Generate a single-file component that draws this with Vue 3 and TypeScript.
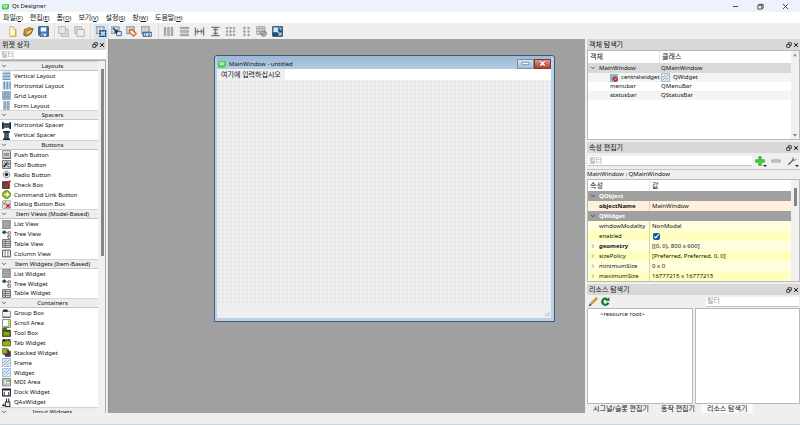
<script setup lang="ts">
import { h, ref } from 'vue'

/* Each shape is [path data, fill, stroke, stroke width] on a 16 x 16 grid. */
type Shape = [string, string, string?, number?]

const steel = '#5b7f9f'
const grey = '#8c8c8c'

const threeRows: Shape[] = [
  ['M1 1h14v4H1z M1 6h14v4H1z M1 11h14v4H1z', '#a9cbe4'],
  ['M1 5h14 M1 10h14 M1 15h14', 'none', steel, 1.5],
]
const threeCols: Shape[] = [
  ['M1 1h4v14H1z M6 1h4v14H6z M11 1h4v14h-4z', '#a9cbe4'],
  ['M4.5 1v14 M9.5 1v14 M14.5 1v14', 'none', steel, 1.5],
]
const nineCells: Shape[] = [
  ['M1 1h4v4H1z M6 1h4v4H6z M11 1h4v4h-4z M1 6h4v4H1z M6 6h4v4H6z M11 6h4v4h-4z M1 11h4v4H1z M6 11h4v4H6z M11 11h4v4h-4z', '#a9cbe4', steel, 1],
]
const sixCells: Shape[] = [
  ['M3 1h4v4H3z M9 1h4v4H9z M3 6h4v4H3z M9 6h4v4H9z M3 11h4v4H3z M9 11h4v4H9z', '#a9cbe4', steel, 1],
]
const listShape: Shape[] = [
  ['M1 0h14v16H1z', '#9b9b9b', '#777777', 1],
  ['M3 3h9 M3 6h9 M3 9h9 M3 12h9', 'none', '#b8b8b8', 1],
]
const treeShape: Shape[] = [
  ['M0 4l4-3 4 3-4 3z', '#1b6b2c', '#124a1e', 1],
  ['M8 5h3v8 M8 12h3', 'none', '#555555', 1],
  ['M11 3h4v4h-4z M11 10h4v5h-4z', '#eeeeee', '#555555', 1.2],
]
const tableShape: Shape[] = [
  ['M1 1h14v14H1z', '#d6d6d6', '#555555', 1.4],
  ['M1 4.5h14 M1 8h14 M1 11.5h14 M6 1v14', 'none', '#555555', 1.2],
]
const frameShape: Shape[] = [
  ['M1 1h14v14H1z', '#e8f0f8', '#8fb2da', 1.6],
  ['M2 9l6-6 M3 13L13 3 M8 13l5-5', 'none', '#7f93a8', 1.5],
]
const form: Shape[] = [
  ['M0 1h12v10H0z', '#b8bec6', '#7d858f', 1],
  ['M1 4h10 M1 7h10 M4 2v8 M8 2v8', 'none', '#e6e9ed', 1],
]

const icons: Record<string, Shape[]> = {
  'vertical-layout': threeRows,
  'horizontal-layout': threeCols,
  'grid-layout': nineCells,
  'form-layout': sixCells,
  'horizontal-spacer': [
    ['M0 2h3v12H0z M13 2h3v12h-3z', '#182430'],
    ['M2 4h12v8H2z', '#2a3d4e'],
    ['M4 7l2 3 2-3 2 3 2-3', 'none', '#6d93b5', 1],
  ],
  'vertical-spacer': [
    ['M2 0h12v3H2z M2 13h12v3H2z', '#182430'],
    ['M4 2h8v12H4z', '#2a3d4e'],
    ['M6 4l4 2-4 2 4 2-4 2', 'none', '#6d93b5', 1],
  ],
  'push-button': [
    ['M1 1h14v13H1z', '#e2e2e2', '#777777', 1.4],
    ['M4 6h8v4H4z', '#ffffff', '#555555', 1.2],
    ['M6 8h4', 'none', '#222222', 1.2],
    ['M1 15h15V2', 'none', '#444444', 1.4],
  ],
  'tool-button': [
    ['M1 1h14v14H1z', '#cfd4da', '#555555', 1.4],
    ['M3 12l6-6', 'none', '#222222', 3],
    ['M8 3l5 5', 'none', '#3c6a94', 2],
    ['M4 4l3 3 M9 10l4 3', 'none', '#333333', 1.4],
  ],
  'radio-button': [
    ['M8 2a6 6 0 1 0 .1 0z', '#eeeeee', '#777777', 1.5],
    ['M8 5.500a2.500 2.500 0 1 0 .1 0z', '#111111', '#222222', 1.5],
  ],
  'check-box': [
    ['M1 3h12v12H1z', '#4b4b4b', '#222222', 1.4],
    ['M3 7l4 5 8-11', 'none', '#dd1f1f', 3],
  ],
  'command-link': [
    ['M8 1a7 7 0 1 0 .1 0z', '#98bd19', '#53700a', 1.5],
    ['M4 8h7 M8 4.500l4 3.500-4 3.500', 'none', '#ffffff', 2],
  ],
  'dialog-box': [
    ['M1 1h14v14H1z', '#dedede', '#999999', 1.2],
    ['M2 5l2 3 3-6', 'none', '#4b9a3c', 1.6],
    ['M7 7l7 7 M14 7l-7 7', 'none', '#d02035', 2.4],
  ],
  list: listShape,
  tree: treeShape,
  table: tableShape,
  column: [
    ['M1 2h14v12H1z', '#f5f5f5', '#444444', 1.6],
    ['M5.500 2v12 M10.500 2v12', 'none', '#666666', 1.3],
  ],
  'group-box': [
    ['M1 4h14v10H1z', '#f0f0f0', '#777777', 1.4],
    ['M2 1h8v4H2z', '#222222'],
    ['M1 15h14', 'none', '#444444', 1.4],
  ],
  'scroll-area': [
    ['M1 1h14v14H1z', '#ffffff', '#666666', 1.4],
    ['M12 2v12', 'none', '#a7c850', 3],
    ['M3 14h8', 'none', '#555555', 1.6],
  ],
  'tool-box': [
    ['M1 1h7v3h7v11H1z', '#5d7d10', '#2e3d08', 1.4],
    ['M3 7h10v6H3z', '#7da61c'],
    ['M2 5h12', 'none', '#222222', 1.4],
  ],
  'tab-widget': [
    ['M1 5h14v9H1z', '#8fb51b', '#3f5a0a', 1.4],
    ['M1 2h5v4H1z', '#222222'],
    ['M6 2h4v3H6z', '#c32020'],
    ['M10 2h5v3h-5z', '#1f3e8c'],
  ],
  'stacked-widget': [
    ['M6 6h9v9H6z', '#1f3e8c', '#14234f', 1],
    ['M3 3h9v9H3z', '#c32020', '#6c1111', 1],
    ['M1 1h8v9H1z', '#8fb51b', '#3f5a0a', 1.2],
  ],
  frame: frameShape,
  'mdi-area': [
    ['M1 1h14v13H1z', '#ffffff', '#555555', 1.4],
    ['M3 3h5v9H3z', '#d6e2ee', '#888888', 1],
    ['M9 3h5v4H9z', '#78b04d'],
    ['M9 9h5v4H9z', '#b9c6d3'],
  ],
  'dock-widget': [
    ['M1 2h14v12H1z', '#ffffff', '#1d2833', 1.8],
    ['M1 3h14', 'none', '#1d2833', 3],
    ['M4 7v6 M12 7v6', 'none', '#1d2833', 1.6],
  ],
  'qax-widget': [
    ['M6 7h8v8H6z', '#f0f0f0', '#333333', 1.8],
    ['M8 1v6 M12 1v6 M0 13h6', 'none', '#333333', 2],
    ['M3 10v5', 'none', '#333333', 1.6],
  ],

  new: [
    ['M4 1h5l4 4v10H4z', '#fffbe2', '#b8a56a', 1.2],
    ['M12 5v10H5', 'none', '#dcae36', 1.6],
    ['M9 1v4h4', '#ffffff', '#b8a56a', 1],
  ],
  open: [
    ['M1 13l1-8 4-1 2-2 6 2-2 7-7 4z', '#d9a13c', '#7a5518', 1.2],
    ['M2 14l4-7 9-3-4 7z', '#f3cf75', '#7a5518', 1.2],
  ],
  save: [
    ['M1 1h14v14H3l-2-2z', '#3c76b4', '#244d7c', 1.4],
    ['M4 2h8v6H4z', '#f5f9fd'],
    ['M5 11h7v4H5z', '#dbe5ef'],
    ['M6 12h2v3H6z', '#244d7c'],
  ],
  back: [
    ['M5 5h10v10H5z', '#e0e0e0', '#b4b4b4', 1.4],
    ['M1 1h10v10H1z', '#e6e6e6', '#b4b4b4', 1.4],
  ],
  front: [
    ['M1 1h10v10H1z', '#dddddd', '#b4b4b4', 1.4],
    ['M4 5h11v10H4z', '#eeeeee', '#b0b0b0', 1.4],
  ],
  'edit-widgets': [
    ...form,
    ['M6 7h8v8H6z', '#b7d5ef', '#1f4467', 1.2],
    ['M5 6h2v2H5z M9 6h2v2H9z M13 6h2v2h-2z M5 10h2v2H5z M13 10h2v2h-2z M5 14h2v2H5z M9 14h2v2H9z M13 14h2v2h-2z', '#13293f'],
  ],
  'edit-signals': [
    ...form,
    ['M8 8h7v6H8z', '#dbe9f6', '#3d6c9d', 1.4],
    ['M3 3l6 6 M9 5v4H5', 'none', '#152c47', 1.8],
  ],
  'edit-buddies': [
    ...form,
    ['M5 6l4-1 6 6-4 4-6-5z', '#f7c9a2', '#c25a1c', 1.5],
    ['M8 8l3 3', 'none', '#ffffff', 1.5],
  ],
  'edit-tabs': [
    ...form,
    ['M3 9h12v6H3z', '#5d93c8', '#28507c', 1.2],
    ['M5 11v3 M8 11h2v3H8z M12 11h2v3', 'none', '#ffffff', 1.2],
  ],
  'lay-h': [['M2 2h2v12H2z M7 2h2v12H7z M12 2h2v12h-2z', '#dddddd', grey, 1.2]],
  'lay-v': [['M2 2h12v2H2z M2 7h12v2H2z M2 12h12v2H2z', '#dddddd', grey, 1.2]],
  'split-h': [['M2 2v12 M14 2v12 M4 8h8 M6 5L4 8l2 3 M10 5l2 3-2 3', 'none', '#777777', 1.8]],
  'split-v': [['M2 2h12 M2 14h12 M8 4v8 M5 6l3-2 3 2 M5 10l3 2 3-2', 'none', '#777777', 1.8]],
  'lay-grid': [
    ['M2 2h2v2H2z M7 2h2v2H7z M12 2h2v2h-2z M2 7h2v2H2z M7 7h2v2H7z M12 7h2v2h-2z M2 12h2v2H2z M7 12h2v2H7z M12 12h2v2h-2z', '#dddddd', grey, 1.2],
  ],
  'lay-form': [['M4 2h2v2H4z M10 2h2v2h-2z M4 7h2v2H4z M10 7h2v2h-2z M4 12h2v2H4z M10 12h2v2h-2z', '#dddddd', grey, 1.2]],
  'break-layout': [
    ['M1 1h12v11H1z M1 4h12 M1 8h12 M5 1v11 M9 1v11', '#e2e2e2', '#999999', 1.2],
    ['M11 7a4 4 0 1 0 .1 0z M8 13l6-4', '#bbbbbb', '#777777', 1.4],
  ],
  'adjust-size': [
    ['M1 1h14v14H1z', '#245179', '#18344f', 1.2],
    ['M2 2h7v7H2z', '#d5e7f6'],
    ['M6 6l7 7 M13 9v4H9 M10 3h3v3', 'none', '#b8dbf6', 1.6],
  ],

  qt: [
    ['M3 2h13v10l-3 3H0V5z', '#41cd52'],
    ['M4 5h3v5H4z M10 4v6h2 M9 6h4', 'none', '#ffffff', 1.4],
  ],
  chevron: [['M3 5l5 5 5-5', 'none', '#333333', 2]],
  right: [['M5 3l5 5-5 5', 'none', '#777777', 1.8]],
  float: [
    ['M6 2h8v7H6z', '#ffffff', '#111111', 2.2],
    ['M2 7h8v7H2z', '#ffffff', '#111111', 2.2],
  ],
  close: [['M3 3l10 10 M13 3L3 13', 'none', '#111111', 2.6]],
  minimize: [['M2 8h12', 'none', '#222222', 1.8]],
  restore: [
    ['M5 5V3h9v9h-2', 'none', '#222222', 1.8],
    ['M2 5h9v9H2z', 'none', '#222222', 1.8],
  ],
  quit: [['M2 2l12 12 M14 2L2 14', 'none', '#222222', 1.8]],
  'win-min': [['M2 6h12v4H2z', '#ffffff', '#5c6f85', 1.2]],
  'win-close': [
    ['M3 3l10 10 M13 3L3 13', 'none', '#66241d', 6],
    ['M3 3l10 10 M13 3L3 13', 'none', '#ffffff', 4],
  ],
  broken: [
    ...nineCells,
    ['M10.500 6a4.500 4.500 0 1 0 .1 0z', '#d12c2c', '#7c1515', 1],
    ['M8 13l5-5', 'none', '#ffffff', 1.4],
  ],
  plus: [
    ['M6 1h4v5h5v4h-5v5H6v-5H1V6h5z', '#3fd43a', '#1c9a1c', 1],
  ],
  minus: [['M1 6h14v4H1z', '#c3c3c3', '#a2a2a2', 1]],
  wrench: [
    ['M2 14l9-9', 'none', '#555555', 2],
    ['M10 2l-1 4 3 1 3-2', 'none', '#777777', 1.6],
  ],
  pencil: [
    ['M2 14l2-4 9-9 2 2-9 9z', '#f0a834', '#9a5f14', 1],
    ['M1 15l2-4 2 2z', '#333333'],
    ['M12 2l2 2', 'none', '#d98a2a', 2],
  ],
  reload: [
    ['M13 10a5.500 5.500 0 1 1-2-6', 'none', '#127a22', 4],
    ['M8 7h7V0z', '#127a22'],
  ],
  up: [['M3 11l5-7 5 7z', '#909090']],
  down: [['M3 5l5 7 5-7z', '#777777']],
  grip: [['M12 1h3v3h-3z M12 6h3v3h-3z M12 11h3v3h-3z M7 6h3v3H7z M7 11h3v3H7z M2 11h3v3H2z', '#b0b0b0']],
}

const Glyph = (props: { name: string; size?: number }) =>
  h(
    'svg',
    { class: 'glyph', viewBox: '0 0 16 16', width: props.size ?? 9, height: props.size ?? 9, 'aria-hidden': 'true' },
    icons[props.name].map(([d, fill, stroke, width]) =>
      h('path', { d, fill, stroke: stroke ?? 'none', 'stroke-width': width ?? 0 }),
    ),
  )
Glyph.props = ['name', 'size']

const menus = [
  ['파일', 'F'], ['편집', 'E'], ['폼', 'O'], ['보기', 'V'], ['설정', 'S'], ['창', 'W'], ['도움말', 'H'],
]

const toolGroups = [
  { id: 'file', tools: ['new', 'open', 'save'] },
  { id: 'order', tools: ['back', 'front'] },
  { id: 'mode', tools: ['edit-widgets', 'edit-signals', 'edit-buddies', 'edit-tabs'] },
  { id: 'layout', tools: ['lay-h', 'lay-v', 'split-h', 'split-v', 'lay-grid', 'lay-form', 'break-layout', 'adjust-size'] },
]
const mode = ref('edit-widgets')

interface Row { label: string; icon?: string }
const widgetRows: Row[] = [
  { label: 'Layouts' },
  { label: 'Vertical Layout', icon: 'vertical-layout' },
  { label: 'Horizontal Layout', icon: 'horizontal-layout' },
  { label: 'Grid Layout', icon: 'grid-layout' },
  { label: 'Form Layout', icon: 'form-layout' },
  { label: 'Spacers' },
  { label: 'Horizontal Spacer', icon: 'horizontal-spacer' },
  { label: 'Vertical Spacer', icon: 'vertical-spacer' },
  { label: 'Buttons' },
  { label: 'Push Button', icon: 'push-button' },
  { label: 'Tool Button', icon: 'tool-button' },
  { label: 'Radio Button', icon: 'radio-button' },
  { label: 'Check Box', icon: 'check-box' },
  { label: 'Command Link Button', icon: 'command-link' },
  { label: 'Dialog Button Box', icon: 'dialog-box' },
  { label: 'Item Views (Model-Based)' },
  { label: 'List View', icon: 'list' },
  { label: 'Tree View', icon: 'tree' },
  { label: 'Table View', icon: 'table' },
  { label: 'Column View', icon: 'column' },
  { label: 'Item Widgets (Item-Based)' },
  { label: 'List Widget', icon: 'list' },
  { label: 'Tree Widget', icon: 'tree' },
  { label: 'Table Widget', icon: 'table' },
  { label: 'Containers' },
  { label: 'Group Box', icon: 'group-box' },
  { label: 'Scroll Area', icon: 'scroll-area' },
  { label: 'Tool Box', icon: 'tool-box' },
  { label: 'Tab Widget', icon: 'tab-widget' },
  { label: 'Stacked Widget', icon: 'stacked-widget' },
  { label: 'Frame', icon: 'frame' },
  { label: 'Widget', icon: 'frame' },
  { label: 'MDI Area', icon: 'mdi-area' },
  { label: 'Dock Widget', icon: 'dock-widget' },
  { label: 'QAxWidget', icon: 'qax-widget' },
  { label: 'Input Widgets' },
]

const enabled = ref(true)
const properties = [
  { name: 'windowModality', value: 'NonModal' },
  { name: 'enabled', check: true },
  { name: 'geometry', value: '[(0, 0), 800 x 600]', bold: true, opens: true },
  { name: 'sizePolicy', value: '[Preferred, Preferred, 0, 0]', opens: true },
  { name: 'minimumSize', value: '0 x 0', opens: true },
  { name: 'maximumSize', value: '16777215 x 16777215', opens: true },
]

const tabs = ['시그널/슬롯 편집기', '동작 편집기', '리소스 탐색기']
const activeTab = ref(2)
</script>

<template>
  <div class="app">
    <header class="titlebar">
      <Glyph name="qt" :size="7" />
      <span class="app-name">Qt Designer</span>
      <button class="win-button" aria-label="Minimize"><Glyph name="minimize" :size="7" /></button>
      <button class="win-button" aria-label="Restore"><Glyph name="restore" :size="7" /></button>
      <button class="win-button" aria-label="Close"><Glyph name="quit" :size="7" /></button>
    </header>

    <nav class="menubar">
      <button v-for="[label, key] in menus" :key="key">{{ label }}<span class="key">(<u>{{ key }}</u>)</span></button>
    </nav>

    <div class="toolbar">
      <div v-for="group in toolGroups" :key="group.id" class="tool-group" :class="group.id">
        <button
          v-for="tool in group.tools"
          :key="tool"
          class="tool"
          :class="{ active: tool === mode }"
          :aria-label="tool"
          @click="group.id === 'mode' && (mode = tool)"
        >
          <Glyph :name="tool" :size="11" />
        </button>
      </div>
    </div>

    <div class="workspace">
      <aside class="widget-box">
        <div class="dock-title">
          <h2>위젯 상자</h2>
          <button aria-label="Float"><Glyph name="float" :size="6" /></button>
          <button aria-label="Close"><Glyph name="close" :size="6" /></button>
        </div>
        <input class="filter" type="text" placeholder="필터" aria-label="필터" />
        <div class="widget-scroll">
          <ul class="widget-list">
            <li v-for="row in widgetRows" :key="row.label" :class="{ category: !row.icon }">
              <Glyph :name="row.icon ?? 'chevron'" :size="row.icon ? 9 : 6" />
              <span>{{ row.label }}</span>
            </li>
          </ul>
          <div class="track"><div class="thumb"></div></div>
        </div>
      </aside>

      <main class="canvas">
        <section class="form-window">
          <div class="form-title">
            <Glyph name="qt" :size="8" />
            <span>MainWindow - untitled</span>
            <button class="form-min" aria-label="Minimize"><Glyph name="win-min" :size="9" /></button>
            <button class="form-close" aria-label="Close"><Glyph name="win-close" :size="7" /></button>
          </div>
          <div class="form-client">
            <div class="form-menu"><button>여기에 입력하십시오</button></div>
            <div class="form-grid"></div>
            <div class="form-status"><Glyph name="grip" :size="6" /></div>
          </div>
        </section>
      </main>

      <aside class="docks">
        <section class="dock">
          <div class="dock-title">
            <h2>객체 탐색기</h2>
            <button aria-label="Float"><Glyph name="float" :size="6" /></button>
            <button aria-label="Close"><Glyph name="close" :size="6" /></button>
          </div>
          <div class="view objects">
            <div class="sheet">
              <table>
                <thead><tr><th>객체</th><th>클래스</th></tr></thead>
                <tbody>
                  <tr class="selected">
                    <td><div class="cell"><Glyph name="chevron" :size="6" /><span class="root">MainWindow</span></div></td>
                    <td>QMainWindow</td>
                  </tr>
                  <tr>
                    <td><div class="cell child"><Glyph name="broken" :size="8" /><span>centralwidget</span></div></td>
                    <td><div class="cell"><Glyph name="frame" :size="9" /><span>QWidget</span></div></td>
                  </tr>
                  <tr><td><div class="cell child">menubar</div></td><td>QMenuBar</td></tr>
                  <tr><td><div class="cell child">statusbar</div></td><td>QStatusBar</td></tr>
                </tbody>
              </table>
            </div>
            <div class="arrows"><Glyph name="up" :size="6" /><Glyph name="down" :size="6" /></div>
          </div>
        </section>

        <section class="dock">
          <div class="dock-title">
            <h2>속성 편집기</h2>
            <button aria-label="Float"><Glyph name="float" :size="6" /></button>
            <button aria-label="Close"><Glyph name="close" :size="6" /></button>
          </div>
          <div class="property-tools">
            <input class="filter" type="text" placeholder="필터" aria-label="필터" />
            <button class="drop" aria-label="Add"><Glyph name="plus" :size="10" /></button>
            <button aria-label="Remove"><Glyph name="minus" :size="10" /></button>
            <button class="drop" aria-label="Configure"><Glyph name="wrench" :size="10" /></button>
          </div>
          <p class="object-path">MainWindow : QMainWindow</p>
          <div class="view properties">
            <div class="sheet">
              <table>
                <thead><tr><th>속성</th><th>값</th></tr></thead>
                <tbody>
                  <tr class="class-row"><td colspan="2"><div class="cell"><Glyph name="chevron" :size="6" /><span>QObject</span></div></td></tr>
                  <tr class="peach"><td><div class="cell plain"><b>objectName</b></div></td><td>MainWindow</td></tr>
                  <tr class="class-row"><td colspan="2"><div class="cell"><Glyph name="chevron" :size="6" /><span>QWidget</span></div></td></tr>
                  <tr v-for="(p, i) in properties" :key="p.name" :class="i % 2 ? 'deep' : 'pale'">
                    <td>
                      <div class="cell" :class="{ plain: !p.opens }">
                        <Glyph v-if="p.opens" name="right" :size="6" />
                        <label v-if="p.check" for="enabled">{{ p.name }}</label>
                        <span v-else :class="{ strong: p.bold }">{{ p.name }}</span>
                      </div>
                    </td>
                    <td>
                      <input v-if="p.check" id="enabled" v-model="enabled" type="checkbox" />
                      <template v-else>{{ p.value }}</template>
                    </td>
                  </tr>
                </tbody>
              </table>
            </div>
            <div class="track"><div class="thumb"></div></div>
          </div>
        </section>

        <section class="dock resources">
          <div class="dock-title">
            <h2>리소스 탐색기</h2>
            <button aria-label="Float"><Glyph name="float" :size="6" /></button>
            <button aria-label="Close"><Glyph name="close" :size="6" /></button>
          </div>
          <div class="resource-tools">
            <button aria-label="Edit"><Glyph name="pencil" :size="10" /></button>
            <button aria-label="Reload"><Glyph name="reload" :size="9" /></button>
            <input class="filter" type="text" placeholder="필터" aria-label="필터" />
          </div>
          <div class="panes">
            <div class="view pane">&lt;resource root&gt;</div>
            <div class="view pane"></div>
          </div>
          <div class="tabs">
            <button v-for="(tab, i) in tabs" :key="tab" :class="{ active: i === activeTab }" @click="activeTab = i">{{ tab }}</button>
          </div>
        </section>
      </aside>
    </div>

    <footer class="statusbar"></footer>
  </div>
</template>

<style>
body {
  margin: 0;
}
</style>

<style scoped>
* {
  box-sizing: border-box;
}

.app {
  display: flex;
  flex-direction: column;
  height: 100vh;
  background: #efefef;
  color: #111111;
  font: 6px/10px "Noto Sans", "Noto Sans CJK KR", sans-serif;
  white-space: nowrap;
}

button,
input {
  margin: 0;
  padding: 0;
  border: 0;
  background: none;
  color: inherit;
  font: inherit;
}

button {
  display: flex;
  align-items: center;
  justify-content: center;
}

/* Hangul labels are set one step larger than Latin ones. */
.menubar button,
.dock-title h2,
.filter,
.form-menu button,
.tabs button,
th {
  font-size: 7px;
}

.menubar .key {
  font-size: 6px;
}

.glyph {
  display: block;
  flex: none;
}

.titlebar {
  display: flex;
  align-items: center;
  height: 12px;
  flex: none;
  padding: 0 2px;
  background: #eef3fb;
}

.app-name {
  flex: 1;
  padding-left: 3px;
}

.win-button {
  width: 25px;
  height: 12px;
}

.menubar {
  display: flex;
  gap: 7px;
  flex: none;
  height: 11px;
  padding: 0 3px;
  background: #ffffff;
}

.toolbar {
  display: flex;
  flex: none;
  height: 16px;
  background: #efefef;
}

.tool-group {
  display: flex;
  align-items: center;
  justify-content: space-between;
  border-right: 1px solid #dcdcdc;
}

.tool-group.file {
  width: 55px;
  padding: 0 3px 0 5px;
}

.tool-group.order {
  width: 36px;
  padding: 0 3px 0 1px;
}

.tool-group.mode {
  width: 68px;
  padding: 0 4px 0 3px;
}

.tool-group.layout {
  width: 126px;
  padding-left: 2px;
  border-right: 0;
}

.tool {
  width: 15px;
  height: 15px;
}

.tool.active {
  background: #cce8ff;
}

.workspace {
  display: flex;
  flex: 1;
  min-height: 0;
}

.statusbar {
  flex: none;
  height: 12px;
  border-bottom: 1px solid #cfd3de;
}

.dock-title {
  display: flex;
  align-items: center;
  flex: none;
  height: 11px;
  padding: 0 1px 0 2px;
  background: #d8d8d8;
}

.dock-title h2 {
  flex: 1;
  margin: 0;
  font-weight: 400;
}

.dock-title button {
  width: 7px;
  height: 9px;
}

.filter {
  height: 10px;
  min-width: 0;
  padding: 0 1px;
  border-bottom: 1px solid #c4c4c4;
  background: #ffffff;
}

.filter::placeholder {
  color: #9a9a9a;
  opacity: 1;
}

.view {
  border: 1px solid #b9b9b9;
  background: #ffffff;
}

/* Widget box */
.widget-box {
  display: flex;
  flex-direction: column;
  flex: none;
  width: 109px;
  padding-right: 2px;
  border-right: 1px solid #8f8f8f;
}

.widget-scroll {
  display: flex;
  flex: 1;
  min-height: 0;
  overflow: hidden;
  border-top: 1px solid #b0b0b0;
  border-right: 1px solid #b0b0b0;
}

.widget-list {
  display: grid;
  grid-auto-rows: minmax(0, 1fr);
  flex: none;
  width: 98px;
  height: calc(100% + 4px);
  margin: 0;
  padding: 0;
  background: #ffffff;
  list-style: none;
}

.widget-list li {
  display: flex;
  align-items: center;
  gap: 3px;
  padding-left: 2px;
}

.widget-list .category {
  gap: 0;
  padding-left: 1px;
  border-top: 1px solid #d4d4d4;
  border-bottom: 1px solid #c4c4c4;
  background: #ededed;
}

.category span {
  flex: 1;
  text-align: center;
}

.track {
  flex: 1;
  background: #f0f0f0;
}

.widget-scroll .thumb {
  width: 3px;
  height: 53%;
  margin: 8px 0 0 3px;
  background: #858585;
}

/* Form canvas */
.canvas {
  position: relative;
  flex: 1;
  min-width: 0;
  background: #a0a0a0;
}

.form-window {
  position: absolute;
  left: 105px;
  top: 16px;
  display: flex;
  flex-direction: column;
  width: 341px;
  height: 267px;
  padding: 0 3px 3px 2px;
  border: 1px solid #3f5a6c;
  border-radius: 3px 3px 0 0;
  background: #b9d1ea;
}

.form-title {
  display: flex;
  align-items: center;
  flex: none;
  height: 13px;
  padding: 2px 0 0 1px;
  background: linear-gradient(#9cb8d6, #b4cbe4);
}

.form-title span {
  flex: 1;
  padding-left: 3px;
}

.form-min,
.form-close {
  width: 17px;
  height: 10px;
  border: 1px solid #7890aa;
  background: linear-gradient(#d5e1ee, #a9bfd6);
}

.form-close {
  border-color: #7a3a35;
  background: linear-gradient(#e29a8e, #bd3a2a);
}

.form-client {
  display: flex;
  flex: 1;
  flex-direction: column;
  background: #efefef;
}

.form-menu {
  display: flex;
  height: 11px;
  background: #ffffff;
}

.form-menu button {
  padding: 0 4px;
  background: #f0f0f0;
}

.form-grid {
  flex: 1;
  background: radial-gradient(circle at 2px 2px, #e5e5e5 0, #e5e5e5 1px, transparent 1px) 0 0 / 4px 4px;
}

.form-status {
  display: flex;
  align-items: flex-end;
  justify-content: flex-end;
  height: 12px;
  padding: 1px;
}

/* Right docks */
.docks {
  display: flex;
  flex-direction: column;
  flex: none;
  width: 215px;
  gap: 2px;
  padding-left: 2px;
}

.view {
  display: flex;
  overflow: hidden;
}

.sheet {
  flex: 1;
  min-width: 0;
}

table {
  width: 100%;
  border-collapse: separate;
  border-spacing: 0;
  table-layout: fixed;
}

th {
  height: 11px;
  padding: 0 2px;
  font-weight: 400;
  text-align: left;
}

td {
  height: 10px;
  padding: 0;
}

.cell {
  display: flex;
  align-items: center;
  gap: 3px;
}

.objects {
  height: 90px;
}

.objects th {
  height: 12px;
}

.objects th:first-child {
  width: 72px;
  border-right: 1px solid #e8e8e8;
}

.objects td:first-child {
  padding-left: 2px;
}

.objects td + td {
  padding-left: 1px;
}

.objects tbody {
  line-height: 9px;
}

.objects tbody td {
  height: 9px;
}

.objects .selected td {
  height: 10px;
}

.objects tr:nth-child(even) {
  background: #f4f4f4;
}

.objects .selected {
  background: #d9d9d9;
}

.cell.child {
  padding-left: 20px;
}

.arrows {
  display: flex;
  flex-direction: column;
  justify-content: space-between;
  width: 8px;
  padding: 1px;
  background: #f0f0f0;
}

.property-tools {
  display: flex;
  align-items: center;
  height: 16px;
  padding-left: 1px;
}

.property-tools .filter {
  flex: 1;
}

.property-tools button {
  width: 16px;
  height: 14px;
}

.drop {
  position: relative;
}

.drop::after {
  position: absolute;
  right: 1px;
  bottom: 1px;
  border: 2px solid transparent;
  border-top-color: #222222;
  border-bottom: 0;
  content: "";
}

.object-path {
  margin: 0;
  border-top: 1px solid #c4c4c4;
  line-height: 9px;
}

.properties {
  height: 103px;
}

.properties th:first-child {
  width: 62px;
  border-right: 1px solid #e0e0e0;
}

.properties td:first-child {
  padding-left: 2px;
  border-right: 1px solid #d5d5ae;
}

.properties td + td {
  padding-left: 2px;
}

.cell.plain {
  padding-left: 9px;
}

.properties tr.class-row td {
  border: 0;
  background: #a0a0a0;
  color: #ffffff;
  font-weight: 700;
}

.peach {
  background: #ffefdf;
}

.pale {
  background: #ffffdf;
}

.deep {
  background: #ffffbf;
}

.strong {
  font-weight: 700;
}

.properties .track {
  flex: none;
  width: 8px;
}

.properties .thumb {
  width: 3px;
  height: 18px;
  margin: 8px 0 0 3px;
  background: #858585;
}

input[type="checkbox"] {
  display: block;
  width: 7px;
  height: 7px;
  margin-left: 1px;
  accent-color: #0a5aa8;
}

.resources {
  display: flex;
  flex: 1;
  flex-direction: column;
  min-height: 0;
}

.resource-tools {
  display: flex;
  align-items: center;
  gap: 3px;
  height: 13px;
  padding: 0 1px;
}

.resource-tools .filter {
  width: 93px;
  margin-left: auto;
}

.panes {
  display: flex;
  flex: 1;
  gap: 2px;
}

.pane {
  flex: 1;
  padding-left: 12px;
}

.tabs {
  display: flex;
  height: 9px;
  line-height: 9px;
}

.tabs button {
  padding: 0 6px;
}

.tabs .active {
  background: #fafafa;
}
</style>
